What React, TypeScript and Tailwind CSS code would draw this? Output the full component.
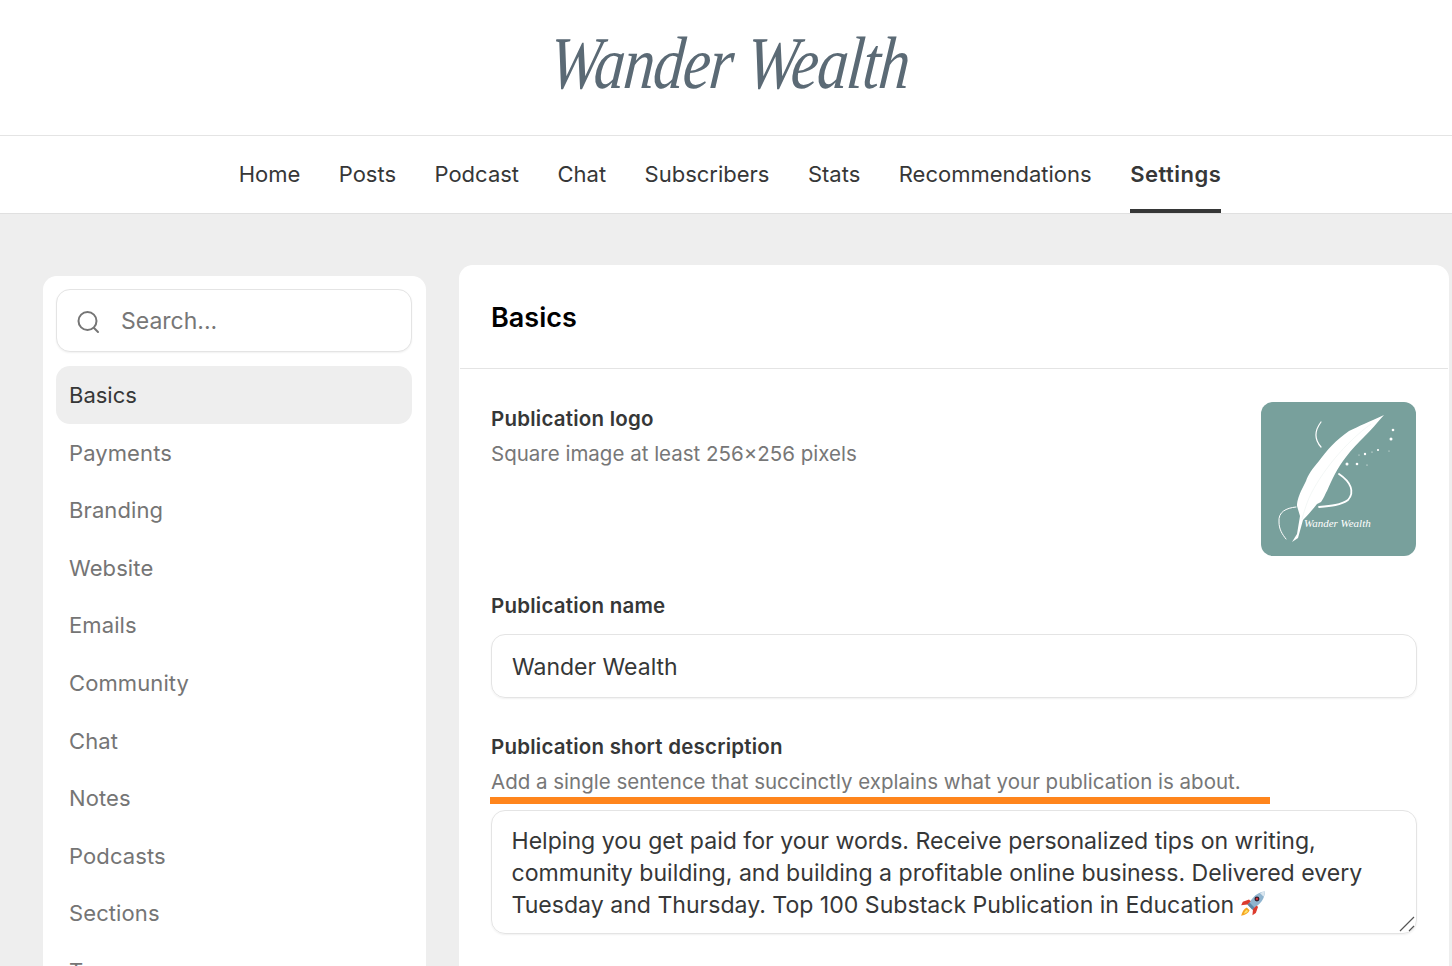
import React from "react";

const navItems = ["Home", "Posts", "Podcast", "Chat", "Subscribers", "Stats", "Recommendations", "Settings"];
const sideItems = ["Payments", "Branding", "Website", "Emails", "Community", "Chat", "Notes", "Podcasts", "Sections", "Tags"];

function Rocket() {
  return (
    <svg viewBox="1.500 1 23 23" className="w-[26px] h-[26px] inline-block align-[-4px] ml-[6px]">
      <path d="M23.500 1.500c-4 .3-8 2.400-10.500 5.500L8 13l4.500 4.500 6-5c3-2.500 5-6.800 5-11z" fill="#8fb4cf" />
      <path d="M8 13l4.500 4.500 2-1.700-4.800-4.800z" fill="#5f87a8" />
      <path d="M23.500 1.500c-1.500.1-3 .5-4.400 1.200l3.300 3.300c.7-1.400 1.100-3 1.100-4.500z" fill="#dbe6ee" />
      <circle cx="16.500" cy="8" r="2.200" fill="#3b1f2b" />
      <circle cx="16.500" cy="8" r="1" fill="#d8343a" />
      <path d="M9.500 8.500 4 10.500l-1.500 3 5.500-.5 3-3z" fill="#dc3b2e" />
      <path d="M17.500 15 15.500 20.500l-3 2 .5-5.500 3-3z" fill="#dc3b2e" />
      <path d="M7.500 15.500c-2.500 1-4 3.500-5 7.500 3.800-1 6.500-2.500 7.500-5z" fill="#f6a623" />
      <path d="M7.500 17.500c-1.300.6-2 1.800-2.600 3.600 1.800-.5 3.100-1.300 3.700-2.500z" fill="#fde36b" />
    </svg>
  );
}

function Feather() {
  return (
    <svg viewBox="0 0 155 154" className="w-[155px] h-[154px] block">
      <path d="M123 13C108 20 98 24 88 29C75 38 66 48 58 59C51 67 47 73 45 79L40 89C37 96 36 100 36 104L39 114L36 132L31 140L37 136L42 118C48 112 52 107 56 102L60 100C64 94 64 92 66 89C71 78 76 66 85 55C91 47 97 41 103 35C110 28 116 21 123 13Z" fill="#fff" />
      <path d="M110 22C85 40 60 70 48 96c-3 7-5 14-7 21" fill="none" stroke="#e6efed" strokeWidth="0.500" />
      <path d="M60 20C54 28 53 37 60 45" fill="none" stroke="#fff" strokeWidth="1.200" strokeLinecap="round" />
      <path d="M78 72C90 80 94 90 87 98C80 103 70 104 58 105" fill="none" stroke="#fff" strokeWidth="1.800" strokeLinecap="round" />
      <path d="M35 105C25 106 17 110 18 120C18 127 21 132 25 137" fill="none" stroke="#fff" strokeWidth="1" strokeLinecap="round" />
      <g fill="#fff">
        <circle cx="86" cy="62" r="1.500" />
        <circle cx="96" cy="62" r="1.300" />
        <circle cx="106" cy="63" r="0.600" />
        <circle cx="104" cy="52" r="1.200" />
        <circle cx="98" cy="53" r="0.500" />
        <circle cx="111" cy="50" r="0.600" />
        <circle cx="117" cy="48" r="1.100" />
        <circle cx="128" cy="49" r="0.500" />
        <circle cx="130" cy="37" r="1.500" />
        <circle cx="132" cy="28" r="1.300" />
      </g>
      <text x="43" y="125" fill="#fff" fontSize="11" fontStyle="italic" fontFamily="'Liberation Serif', serif">Wander Wealth</text>
    </svg>
  );
}

export default function App() {
  return (
    <div className="h-[966px] overflow-hidden bg-[#eeeeee] text-[#363737] font-['Inter','Liberation_Sans',sans-serif]">
      <header className="h-[136px] bg-white border-b border-[#e4e4e4] flex items-center justify-center pl-[6px]">
        <div className="w-[358px] text-center text-[62px] leading-[70px] italic tracking-[-1.300px] whitespace-nowrap text-[#5b6a75] font-['Liberation_Serif',serif] -translate-y-[5px] scale-y-[1.2] -skew-x-[6deg]">
          Wander Wealth
        </div>
      </header>
      <nav className="h-[78px] bg-white border-b border-[#e0e0e0] flex justify-center gap-[38.450px] pl-[8px]">
        {navItems.map((n) => (
          <div
            key={n}
            className={
              "h-[77px] flex items-center text-[22px] border-b-[4px] pt-[4px] " +
              (n === "Settings" ? "font-semibold tracking-[0.5px] border-[#363737]" : "border-transparent")
            }
          >
            {n}
          </div>
        ))}
      </nav>
      <div className="flex items-start pl-[43px] pr-[3px] pt-[51px] gap-[33px]">
        <aside className="w-[383px] shrink-0 mt-[11px] bg-white rounded-t-[14px] border border-white border-b-0 pl-[12px] pr-[12px] pt-[12px]">
          <div className="h-[63px] mr-[1px] rounded-[14px] border border-[#e4e4e4] shadow-[0_1px_2px_rgba(0,0,0,0.06)] bg-white flex items-center pl-[19px] pt-[2px] gap-[21px] text-[23px] text-[#777777]">
            <svg viewBox="0 0 24 24" className="w-[24px] h-[24px]" fill="none" stroke="#757575" strokeWidth="2" strokeLinecap="round">
              <circle cx="11.500" cy="11" r="9" />
              <path d="M18 18l4 4" />
            </svg>
            <span>Search...</span>
          </div>
          <div className="mt-[14px] mr-[1px] h-[58px] rounded-[14px] bg-[#eeeeee] flex items-center px-[13px] text-[22px]">Basics</div>
          <div className="flex flex-col pt-[0.300px]">
            {sideItems.map((s) => (
              <div key={s} className="h-[57.600px] flex items-center px-[13px] text-[22px] tracking-[0.1px] text-[#757575]">
                {s}
              </div>
            ))}
          </div>
        </aside>
        <main className="relative flex-1 bg-white rounded-t-[14px] border border-white border-b-0 pb-[40px]">
          <div className="h-[103px] border-b border-[#e4e4e4] flex items-center pt-[2px] px-[31px] text-[27px] font-semibold text-black">Basics</div>
          <div className="pl-[31px] pr-[31px] pt-[33px]">
            <div className="flex justify-between items-start h-[154px]">
              <div>
                <div className="text-[20.500px] leading-[28px] font-semibold tracking-[0.22px] mt-[3px]">Publication logo</div>
                <div className="text-[20.500px] leading-[28px] text-[#777777] mt-[7px]">Square image at least 256×256 pixels</div>
              </div>
              <div className="w-[155px] h-[154px] mr-[1px] rounded-[12px] bg-[#78a09c] overflow-hidden">
                <Feather />
              </div>
            </div>
            <div className="text-[20.500px] leading-[28px] font-semibold tracking-[0.22px] mt-[36px]">Publication name</div>
            <div className="mt-[14px] h-[64px] rounded-[14px] border border-[#e4e4e4] shadow-[0_1px_2px_rgba(0,0,0,0.06)] flex items-center px-[20px] pt-[2px] text-[23px]">Wander Wealth</div>
            <div className="text-[20.500px] leading-[28px] font-semibold tracking-[0.22px] mt-[35px]">Publication short description</div>
            <div className="text-[20.500px] leading-[28px] text-[#777777] mt-[7px]">Add a single sentence that succinctly explains what your publication is about.</div>
            <div className="absolute left-[30px] top-[531px] w-[780px] h-[7px] bg-[#ff851c]" />
            <div className="relative mt-[14px] h-[124px] rounded-[14px] border border-[#e4e4e4] shadow-[0_1px_2px_rgba(0,0,0,0.06)] px-[19.500px] pt-[14px] text-[23.080px] leading-[32px] whitespace-nowrap">
              <div>Helping you get paid for your words. Receive personalized tips on writing,</div>
              <div>community building, and building a profitable online business. Delivered every</div>
              <div>Tuesday and Thursday. Top 100 Substack Publication in Education<Rocket /></div>
              <svg viewBox="0 0 16 16" className="absolute right-[1px] bottom-[1px] w-[16px] h-[16px]" stroke="#555" strokeWidth="1.200" fill="none">
                <path d="M1 15 15 1M10 15l5-5" />
              </svg>
            </div>
          </div>
        </main>
      </div>
    </div>
  );
}
